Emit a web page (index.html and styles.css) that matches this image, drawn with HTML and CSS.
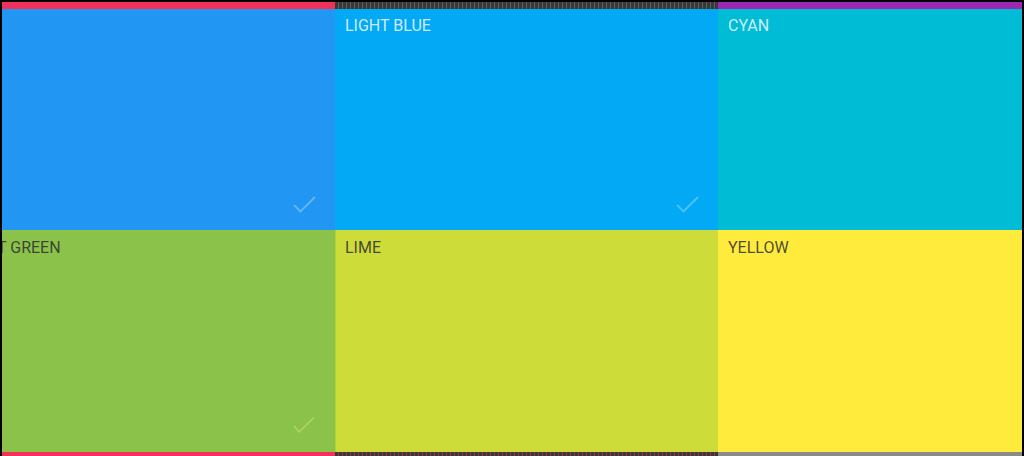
FILE: index.html
```html
<!DOCTYPE html>
<html lang="en">
<head>
    <meta charset="UTF-8">
    <meta name="viewport" content="width=device-width, initial-scale=1.0">
    <title>Colour Picker</title>
    <link rel="stylesheet" href="styles.css">
</head>
<body>
    <div class="frame">
        <div class="palette">
            <div class="strip strip--red"></div>
            <div class="strip strip--dark"></div>
            <div class="strip strip--purple"></div>

            <div class="swatch swatch--blue swatch--light-text">
                <span class="swatch__label">BLUE</span>
                <svg class="swatch__check" viewBox="0 0 24 18"><polyline points="1,9 7.5,15.5 22,1"/></svg>
            </div>
            <div class="swatch swatch--light-blue swatch--light-text">
                <span class="swatch__label">LIGHT BLUE</span>
                <svg class="swatch__check" viewBox="0 0 24 18"><polyline points="1,9 7.5,15.5 22,1"/></svg>
            </div>
            <div class="swatch swatch--cyan swatch--light-text">
                <span class="swatch__label">CYAN</span>
            </div>

            <div class="swatch swatch--light-green">
                <span class="swatch__label">LIGHT GREEN</span>
                <svg class="swatch__check swatch__check--faint" viewBox="0 0 24 18"><polyline points="1,9 6,15 21,0.5"/></svg>
            </div>
            <div class="swatch swatch--lime">
                <span class="swatch__label">LIME</span>
            </div>
            <div class="swatch swatch--yellow">
                <span class="swatch__label">YELLOW</span>
            </div>

            <div class="strip strip--red"></div>
            <div class="strip strip--dark-red"></div>
            <div class="strip strip--grey"></div>
        </div>
    </div>
</body>
</html>
```

FILE: styles.css
```css
html, body {
    margin: 0;
    height: 100%;
    background-color: #000;
}

body {
    font-family: Roboto, "Liberation Sans", sans-serif;
}

.frame {
    margin: 2px 2px 0 2px;
    height: 454px;
    overflow: hidden;
    background-color: #111;
}

.palette {
    display: grid;
    grid-template-columns: repeat(3, 383px);
    grid-template-rows: 7px 221px 222px 4px;
    margin-left: -50px;
}

.strip--red {
    background-color: #f2305a;
}

.strip--purple {
    background-color: #9c27b0;
}

.strip--dark {
    background: repeating-linear-gradient(90deg, #383838 0 3px, #5e5e5e 3px 4px);
}

.strip--dark-red {
    background: repeating-linear-gradient(90deg, #383838 0 3px, #a0304a 3px 4px);
}

.strip--grey {
    background-color: #8a8a8a;
}

.swatch {
    position: relative;
    padding: 7px 10px;
    font-size: 16px;
    line-height: 19px;
    color: rgba(45, 45, 50, 0.85);
}

.swatch--light-text {
    color: rgba(230, 245, 255, 0.9);
}

.swatch--blue { background-color: #2196f3; }
.swatch--light-blue { background-color: #03a9f4; }
.swatch--cyan { background-color: #00bcd4; }
.swatch--light-green { background-color: #8bc34a; padding-top: 8px; }
.swatch--lime { background-color: #cddc39; padding-top: 8px; }
.swatch--yellow { background-color: #ffeb3b; padding-top: 8px; }

.swatch--lime::before {
    content: "";
    position: absolute;
    left: 0;
    top: 0;
    bottom: 0;
    width: 1px;
    background-color: rgba(160, 200, 60, 0.6);
}

.swatch__check {
    position: absolute;
    right: 18px;
    bottom: 16px;
    width: 24px;
    height: 18px;
    fill: none;
    stroke: rgba(255, 255, 255, 0.3);
    stroke-width: 1.8;
}

.swatch__check--faint {
    bottom: 17px;
    stroke: rgba(230, 230, 150, 0.45);
    stroke-width: 1.5;
}
```
